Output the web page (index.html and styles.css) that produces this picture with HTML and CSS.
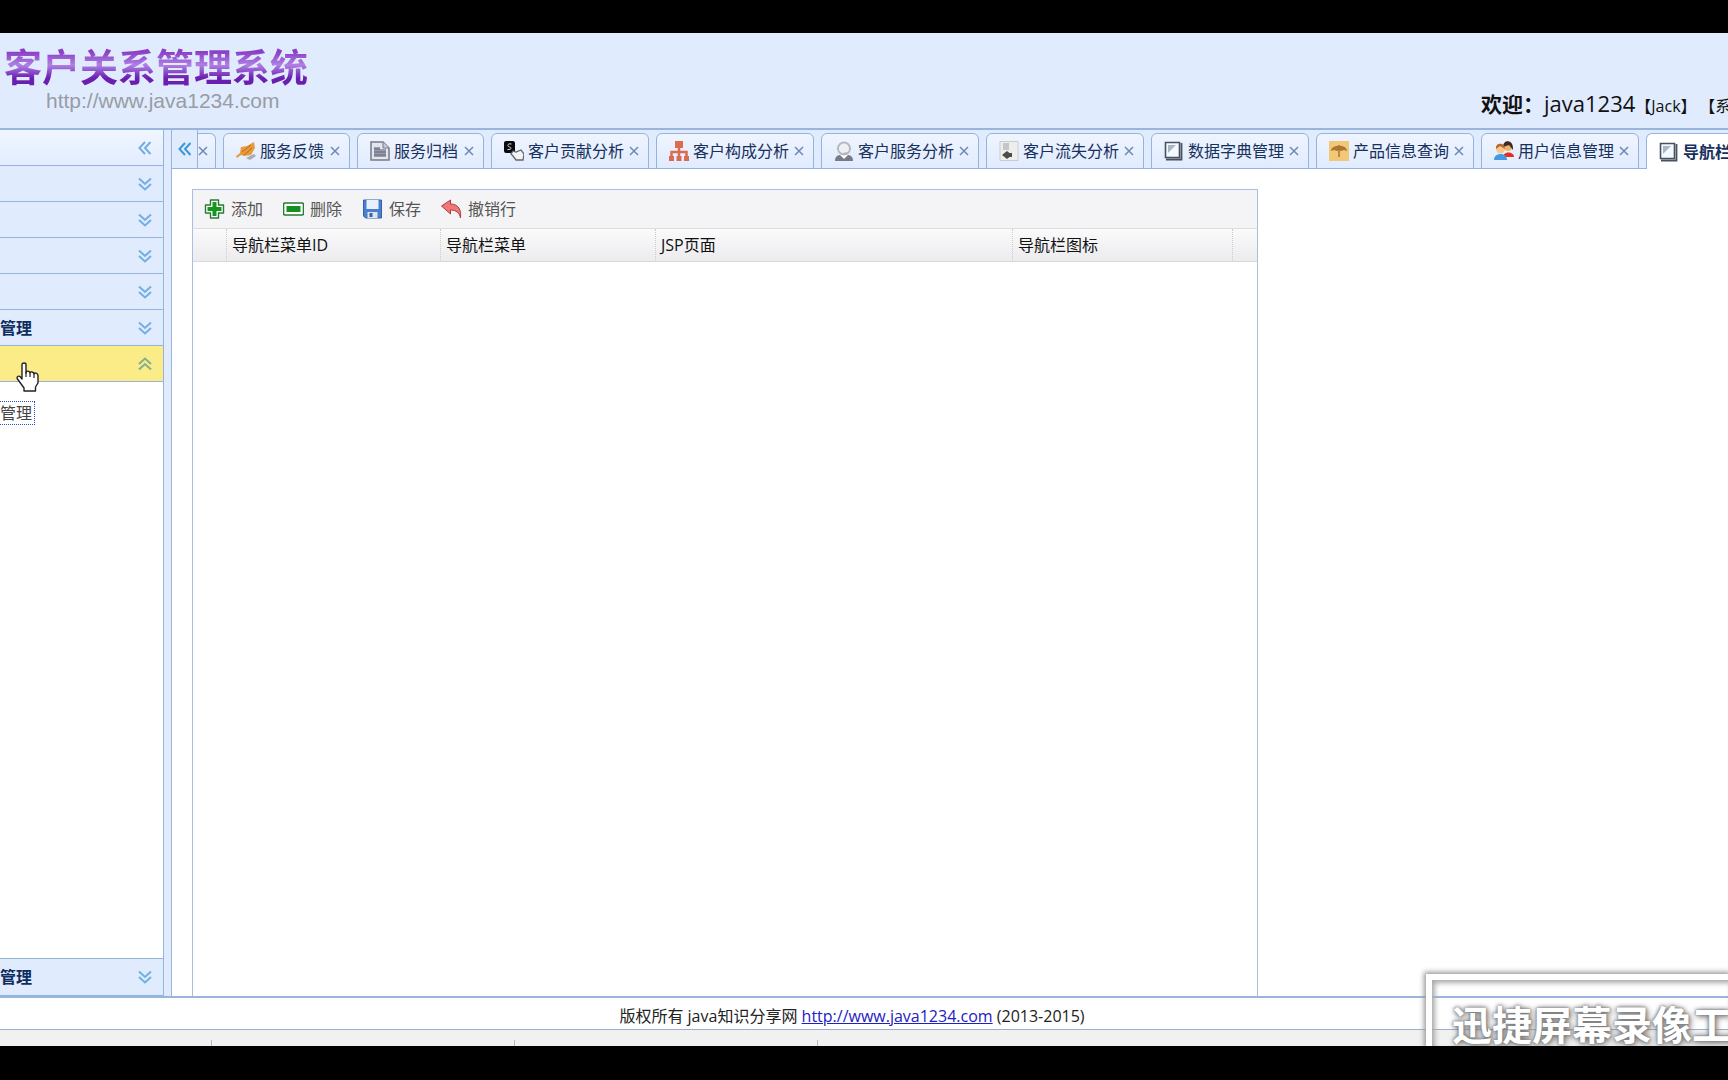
FILE: index.html
```
<!DOCTYPE html>
<html lang="zh-CN">
<head>
<meta charset="utf-8">
<title>客户关系管理系统</title>
<link rel="stylesheet" href="styles.css">
</head>
<body>
<svg class="defs" aria-hidden="true">
  <symbol id="down" viewBox="0 0 14 14"><path d="M1 1.500L7 7L13 1.500M1 7L7 12.500L13 7"/></symbol>
  <symbol id="up" viewBox="0 0 14 14"><path d="M1 7L7 1.500L13 7M1 12.500L7 7L13 12.500"/></symbol>
  <symbol id="left" viewBox="0 0 14 14"><path d="M7 1L1.500 7L7 13M12.500 1L7 7L12.500 13"/></symbol>
  <symbol id="close" viewBox="0 0 10 10"><path d="M1 1L9 9M9 1L1 9"/></symbol>
  <symbol id="book" viewBox="0 0 20 20"><path d="M1.500 1.500h14v15h-14z" fill="#f4f8ff" stroke="#46525f" stroke-width="1.600"/><path d="M17.500 2v16.500H2" fill="none" stroke="#46525f" stroke-width="1.800"/><path d="M4 12V4h8z" fill="#aab6c8"/></symbol>
</svg>
<div class="app">
  <header class="header">
    <div class="brand">
      <h1>客户关系管理系统</h1>
      <p>http://www.java1234.com</p>
    </div>
    <div class="user"><strong>欢迎：</strong><span class="name">java1234</span><span class="role">【Jack】</span><span class="role">【系</span></div>
  </header>

  <div class="main">
    <nav class="side">
      <div class="bar title"><button class="tool" aria-label="收起"><svg><use href="#left"/></svg></button></div>
      <div class="bar"><button class="tool" aria-label="展开"><svg><use href="#down"/></svg></button></div>
      <div class="bar"><button class="tool" aria-label="展开"><svg><use href="#down"/></svg></button></div>
      <div class="bar"><button class="tool" aria-label="展开"><svg><use href="#down"/></svg></button></div>
      <div class="bar"><button class="tool" aria-label="展开"><svg><use href="#down"/></svg></button></div>
      <div class="bar"><span>管理</span><button class="tool" aria-label="展开"><svg><use href="#down"/></svg></button></div>
      <div class="bar active"><button class="tool" aria-label="折叠"><svg><use href="#up"/></svg></button></div>
      <div class="links"><a href="#">管理</a></div>
      <div class="bar last"><span>管理</span><button class="tool" aria-label="展开"><svg><use href="#down"/></svg></button></div>
    </nav>

    <main class="center">
      <div class="tabs">
        <button class="scroller" aria-label="向左"><svg><use href="#left"/></svg></button>
        <div class="tab cut"><button class="close" aria-label="关闭"><svg><use href="#close"/></svg></button></div>
        <div class="tab short"><svg class="icon" viewBox="0 0 20 20"><path d="M10 17l8-4 2 2-6 4z" fill="#a9abb2"/><path d="M0 15l4-3 1-6 6-1 7-4 1 6-4 7-7 1-3-1-4 3z" fill="#e89b3c"/><path d="M6 11l9-7M8 14l8-7" stroke="#b9691b" fill="none"/></svg><button>服务反馈</button><button class="close" aria-label="关闭"><svg><use href="#close"/></svg></button></div>
        <div class="tab short"><svg class="icon" viewBox="0 0 20 20"><path d="M1 1h12l6 6v12H1z" fill="#e4e6ee" stroke="#77798a" stroke-width="1.500"/><path d="M13 1v6h6" fill="#c8cad6" stroke="#77798a"/><path d="M4 6h6v2h6v8H4z" fill="#9a9cab"/><path d="M4 8h6M4 11h12M4 14h12" stroke="#77798a" stroke-width="1.500"/></svg><button>服务归档</button><button class="close" aria-label="关闭"><svg><use href="#close"/></svg></button></div>
        <div class="tab"><svg class="icon" viewBox="0 0 20 20"><rect width="11" height="12" rx="2" fill="#0a0a0d"/><path d="M7.500 3C3 2 3 5.500 5.500 6s2 3-2 2.500" fill="none" stroke="#ddd"/><path d="M9 10l3 1 5-2 3 4-1 6h-7l-3-4-2-2z" fill="#f4f4f6" stroke="#666" stroke-width="1.300"/></svg><button>客户贡献分析</button><button class="close" aria-label="关闭"><svg><use href="#close"/></svg></button></div>
        <div class="tab"><svg class="icon" viewBox="0 0 20 20"><path d="M6 0h8v7H6zM0 15h5v5H0zM7.500 15h5v5h-5zM15 15h5v5h-5z" fill="#dd6b50"/><path d="M10 6v10M2.500 16v-5h15v5" fill="none" stroke="#dd6b50" stroke-width="2.500"/></svg><button>客户构成分析</button><button class="close" aria-label="关闭"><svg><use href="#close"/></svg></button></div>
        <div class="tab"><svg class="icon" viewBox="0 0 20 20"><path d="M1 20c0-5 3-6 6-6h6c3 0 6 1 6 6z" fill="#777b85"/><path d="M6 14l4 4 4-4z" fill="#fff"/><circle cx="10" cy="7.500" r="6" fill="#eef0f4" stroke="#b5b8c0" stroke-width="1.800"/><path d="M3 8h2M15 8h2M13 12l-4 1" stroke="#b5b8c0" stroke-width="2"/></svg><button>客户服务分析</button><button class="close" aria-label="关闭"><svg><use href="#close"/></svg></button></div>
        <div class="tab"><svg class="icon" viewBox="0 0 20 20"><path d="M1 .5h18v19H1z" fill="#eeefed" stroke="#c9cccf"/><path d="M4 2h6v7H4z" fill="#c4c6c9"/><path d="M3 14l5-4v2h5v4H8v2z" fill="#4b4d4d"/><path d="M8 10l5 4-5 4z" fill="#4b4d4d"/></svg><button>客户流失分析</button><button class="close" aria-label="关闭"><svg><use href="#close"/></svg></button></div>
        <div class="tab"><svg class="icon"><use href="#book"/></svg><button>数据字典管理</button><button class="close" aria-label="关闭"><svg><use href="#close"/></svg></button></div>
        <div class="tab"><svg class="icon" viewBox="0 0 20 20"><path d="M0 0h20v20H0z" fill="#f0c878"/><path d="M2 10c0-7 16-7 16 0l-3-1-3 1-2-1-2 1-3-1z" fill="#ad7530"/><path d="M10 4v12" stroke="#ad7530" stroke-width="1.500"/></svg><button>产品信息查询</button><button class="close" aria-label="关闭"><svg><use href="#close"/></svg></button></div>
        <div class="tab"><svg class="icon" viewBox="0 0 20 20"><path d="M9 16c0-6 11-6 11 0z" fill="#e3301f"/><circle cx="14" cy="6" r="4" fill="#efb26e"/><path d="M9 6c0-8 11-8 10 3l-4-5z" fill="#412a20"/><path d="M0 19c0-8 13-8 13 0z" fill="#4499e4"/><circle cx="6.500" cy="8" r="4.500" fill="#f5c98e"/><path d="M2 8c-1-7 9-7 9 0L6 5z" fill="#b5682a"/></svg><button>用户信息管理</button><button class="close" aria-label="关闭"><svg><use href="#close"/></svg></button></div>
        <div class="tab selected"><svg class="icon"><use href="#book"/></svg><button>导航栏</button></div>
      </div>

      <section class="panel">
        <div class="toolbar">
          <button><svg viewBox="0 0 20 20"><path d="M6 1h8v5h5v8h-5v5H6v-5H1V6h5z" fill="#fff" stroke="#287a35" stroke-width="1.400" stroke-linejoin="round"/><path d="M8 3h4v5h5v4h-5v5H8v-5H3V8h5z" fill="#14951c"/></svg>添加</button>
          <button><svg viewBox="0 0 20 20"><rect x="0" y="4" width="20" height="12" rx="1.500" fill="#fff" stroke="#287a35" stroke-width="1.600"/><path d="M3 7h14v6H3z" fill="#149020"/></svg>删除</button>
          <button><svg viewBox="0 0 20 20"><path d="M1 1h18v18H3l-2-2z" fill="#4a7fd0" stroke="#3562aa"/><path d="M4 1h12v9H4z" fill="#e8f1fb"/><path d="M5 13h10v6H5z" fill="#dfe4ec"/><path d="M7 14h3v4H7z" fill="#3562aa"/></svg>保存</button>
          <button><svg viewBox="0 0 20 20"><path d="M0 7l9-6v4c8 0 11 6 10 14-1-5-4-8-10-8v4z" fill="#ee7777" stroke="#ad3d40"/></svg>撤销行</button>
        </div>
        <table>
          <colgroup><col class="num"><col class="mid"><col class="mid"><col class="wide"><col class="pic"><col></colgroup>
          <thead><tr><th></th><th>导航栏菜单ID</th><th>导航栏菜单</th><th>JSP页面</th><th>导航栏图标</th><th></th></tr></thead>
        </table>
      </section>
    </main>
  </div>

  <footer class="footer">版权所有 java知识分享网 <a href="#">http://www.java1234.com</a> (2013-2015)</footer>
  <div class="status"><i></i><i></i><i></i></div>

  <div class="watermark">迅捷屏幕录像工</div>
  <svg class="cursor" viewBox="0 0 24 30"><path d="M6 2.500C6 .5 10 .5 10 2.500V11c0-3 4-2 4 0 0-2 4-1 4 1 0-2 4-1 4 1.500V21l-2.500 4v4H8v-3L1.500 17c-1.500-2 1-4 3-2L6 17z" fill="#fff" stroke="#222" stroke-width="1.400" stroke-linejoin="round"/><path d="M14 11v4M18 12v4M10 10v5" stroke="#222" stroke-width="1.200"/></svg>
</div>
</body>
</html>
```
FILE: styles.css
```
* {
  box-sizing: border-box;
}

body {
  margin: 0;
  height: 100vh;
  padding: 33px 0 34px;
  background: #000;
  color: #222;
  font: 16px/20px "Open Sans", "Noto Sans CJK SC", sans-serif;
}

button {
  margin: 0;
  padding: 0;
  border: 0;
  background: none;
  color: inherit;
  font: inherit;
  white-space: nowrap;
}

svg {
  display: block;
  flex: none;
}

.defs {
  position: absolute;
  width: 0;
  height: 0;
}

.app {
  position: relative;
  display: flex;
  flex-direction: column;
  height: 100%;
  overflow: hidden;
  background: #fff;
}

.header {
  display: flex;
  flex: none;
  justify-content: space-between;
  height: 97px;
  overflow: hidden;
  border-bottom: 2px solid #9ab5dc;
  background: #e0ebfe;
}

.brand {
  padding: 10px 0 0 4px;
}

.brand h1 {
  margin: 0;
  background: linear-gradient(#8a3fc4 20%, #b07fe4 50%, #6a1fae 80%);
  background-clip: text;
  color: transparent;
  font: bold 38px/44px "Noto Sans CJK SC", sans-serif;
}

.brand p {
  margin: 0;
  padding: 2px 0 0 42px;
  color: #999ca3;
  font: 21px/24px "Liberation Sans", sans-serif;
}

.user {
  display: flex;
  align-items: baseline;
  width: 247px;
  padding-top: 55px;
  color: #111;
  line-height: 30px;
  white-space: nowrap;
}

.user strong {
  width: 63px;
  font-family: "Noto Sans CJK TC", sans-serif;
  font-size: 21px;
}

.name {
  width: 93px;
  font-size: 22px;
}

.role {
  width: 64px;
  flex: none;
}

.main {
  display: flex;
  flex: 1;
  min-height: 0;
  border-bottom: 2px solid #9ab5dc;
}

.side {
  display: flex;
  flex: none;
  flex-direction: column;
  width: 164px;
  border-right: 1px solid #95b3df;
}

.bar {
  display: flex;
  flex: none;
  align-items: center;
  height: 36px;
  padding-right: 11px;
  border-bottom: 1px solid #95b3df;
  background: #e0ebfe;
  color: #0e2d5f;
  font-weight: bold;
}

.bar.title {
  background: linear-gradient(#f0f6ff, #e3edff);
}

.bar.active {
  background: #fbec88;
}

.bar.last {
  height: 38px;
  border-top: 1px solid #95b3df;
}

.tool {
  margin-left: auto;
}

.tool svg,
.scroller svg {
  width: 14px;
  height: 14px;
  fill: none;
  stroke: #72afe0;
  stroke-width: 2;
}

.active .tool svg {
  stroke: #83ae91;
}

.links {
  flex: 1;
  padding-top: 19px;
}

.links a {
  display: inline-block;
  padding-right: 2px;
  border: 1px dotted #3347b5;
  border-left: 0;
  color: #444;
  line-height: 22px;
  text-decoration: none;
}

.center {
  display: flex;
  flex: 1;
  flex-direction: column;
  min-width: 0;
  border-left: 7px solid #e0ebfe;
}

.tabs {
  display: flex;
  flex: none;
  align-items: flex-end;
  gap: 7px;
  height: 39px;
  overflow: hidden;
  border-left: 1px solid #95b3df;
  background: linear-gradient(#95b3df, #95b3df) bottom / 100% 1px no-repeat #e0ebfe;
}

.scroller {
  display: flex;
  flex: none;
  align-items: center;
  justify-content: center;
  width: 26px;
  height: 39px;
  margin-right: -7px;
  border-right: 1px solid #95b3df;
  border-bottom: 1px solid #95b3df;
}

.scroller svg {
  stroke: #3a98d8;
}

.tab {
  display: flex;
  flex: none;
  align-items: center;
  gap: 4px;
  width: 158px;
  height: 36px;
  padding: 0 9px 0 12px;
  border: 1px solid #95b3df;
  border-radius: 6px 6px 0 0;
  background: linear-gradient(#eff5ff, #e0ebfe);
  color: #17305c;
}

.tab.short {
  width: 127px;
}

.tab.cut {
  width: 18px;
  padding: 0 9px 0 0;
  border-left: 0;
  border-radius: 0 6px 0 0;
}

.tab.selected {
  border-bottom: 0;
  background: #fff;
  font-weight: bold;
}

.icon {
  width: 20px;
  height: 20px;
}

.close {
  margin-left: auto;
}

.close svg {
  width: 10px;
  height: 10px;
  fill: none;
  stroke: #7087b5;
  stroke-width: 1.500;
}

.panel {
  display: grid;
  flex: 1;
  grid-template-rows: auto 1fr;
  grid-template-columns: 1066px;
  padding: 20px 0 0 20px;
  border-left: 1px solid #95b3df;
}

.toolbar {
  display: flex;
  align-items: center;
  gap: 20px;
  height: 40px;
  padding: 0 11px;
  border: 1px solid #a9bfdd;
  border-bottom-color: #ddd;
  background: #f4f4f6;
  color: #555;
}

.toolbar button {
  display: flex;
  align-items: center;
  gap: 6px;
}

.toolbar svg {
  width: 21px;
  height: 20px;
}

.panel table {
  display: grid;
  align-content: start;
  border: 1px solid #a9bfdd;
  border-width: 0 1px;
}

.panel colgroup {
  display: none;
}

.panel thead {
  display: grid;
}

.panel tr {
  display: grid;
  grid-template-columns: 34px 214px 215px 357px 220px 1fr;
  border-bottom: 1px solid #d9d9dd;
  background: linear-gradient(#fafafb, #ececee);
}

.panel th {
  height: 32px;
  padding: 0 5px;
  border-right: 1px dotted #ccc;
  color: #111;
  font-weight: normal;
  line-height: 33px;
  text-align: left;
}

.panel th:last-child {
  border-right: 0;
}

.footer {
  flex: none;
  height: 31px;
  padding-right: 24px;
  color: #222;
  line-height: 36px;
  text-align: center;
}

.footer a {
  color: #1d20c4;
}

.status {
  display: flex;
  flex: none;
  align-items: flex-end;
  height: 17px;
  border-top: 1px solid #9daeca;
  background: #f1f1f2;
}

.status i {
  width: 303px;
  height: 6px;
  border-right: 1px solid #bbb;
}

.status i:first-child {
  width: 212px;
}

.watermark {
  position: absolute;
  right: 0;
  bottom: 0;
  width: 302px;
  height: 72px;
  padding: 20px 0 0 20px;
  overflow: hidden;
  border: 6px solid #fff;
  border-width: 6px 0 0 6px;
  box-shadow: 0 0 5px 2px #999, inset 3px 3px 5px #aaa;
  color: #fff;
  font: bold 40px/46px "Noto Sans CJK SC", sans-serif;
  text-shadow: 0 0 2px #777, 0 0 5px #777, 2px 2px 6px #888;
  white-space: nowrap;
}

.cursor {
  position: absolute;
  top: 329px;
  left: 16px;
  width: 24px;
  height: 30px;
}
```
